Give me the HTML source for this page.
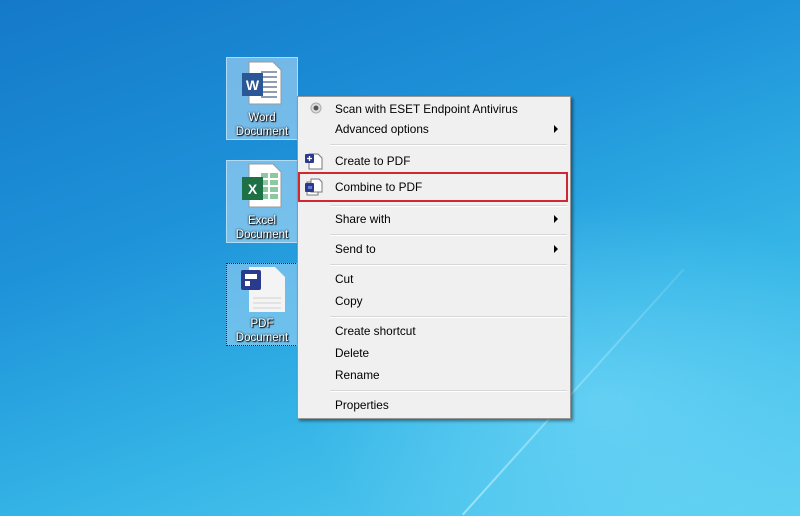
<!DOCTYPE html>
<html><head><meta charset="utf-8"><style>
*{margin:0;padding:0;box-sizing:border-box}
html,body{width:800px;height:516px;overflow:hidden;background:#1e8ad6}
body{position:relative;font-family:"Liberation Sans",sans-serif;}
.bg{position:absolute;left:0;top:0;width:800px;height:516px;overflow:hidden;background:linear-gradient(160deg,#1479c9 0%,#1e92d9 35%,#34b4e6 65%,#5ed0f2 100%);}
.glow{position:absolute;left:300px;top:200px;width:600px;height:400px;border-radius:50%;background:radial-gradient(ellipse at center,rgba(140,230,255,.45),rgba(140,230,255,0) 70%)}
.streak{position:absolute;left:462px;top:514px;width:330px;height:2px;background:linear-gradient(90deg,rgba(200,245,255,.6),rgba(200,245,255,.15));transform-origin:0 0;transform:rotate(-48deg)}
.ic{position:absolute;left:226px;width:72px;height:83px;background:rgba(190,225,250,.55);border:1px solid rgba(220,240,255,.6)}
.lbl{position:absolute;left:0;width:100%;text-align:center;color:#fff;font-size:11.5px;line-height:14px;text-shadow:0 0 2px #000,1px 1px 1px #000}
.menu{position:absolute;left:297px;top:96px;width:274px;height:323px;background:#f0f0f0;border:1px solid #979797;box-shadow:2px 2px 3px rgba(0,0,0,.45)}
.it{position:absolute;left:37px;font-size:11.8px;color:#000;line-height:14px}
.sep{position:absolute;left:32px;right:3px;height:2px;border-top:1px solid #d7d7d7;border-bottom:1px solid #fff}
.arr{position:absolute;left:256px;width:0;height:0;border-left:4px solid #000;border-top:4px solid transparent;border-bottom:4px solid transparent}
</style></head><body>
<div class="bg"><div class="glow"></div><div class="streak"></div>

<div class="ic" style="top:57px">
<svg width="72" height="55" style="position:absolute;left:0;top:0">
<path d="M22 4h24l8 8v34H22z" fill="#fff" stroke="#9a9a9a"/>
<g stroke="#6a7a9a" stroke-width="1.5"><line x1="34" y1="14" x2="50" y2="14"/><line x1="34" y1="19" x2="50" y2="19"/><line x1="34" y1="24" x2="50" y2="24"/><line x1="34" y1="29" x2="50" y2="29"/><line x1="34" y1="34" x2="50" y2="34"/><line x1="34" y1="39" x2="50" y2="39"/></g>
<rect x="15" y="15" width="21" height="23" fill="#2b5797"/>
<text x="25.5" y="32" fill="#fff" font-size="14" font-weight="bold" text-anchor="middle" font-family="Liberation Sans">W</text></svg>
<div class="lbl" style="top:53px">Word<br>Document</div></div>

<div class="ic" style="top:160px">
<svg width="72" height="55" style="position:absolute;left:0;top:0">
<path d="M22 3h24l8 8v35H22z" fill="#fff" stroke="#9a9a9a"/>
<g fill="#8cc8a0"><rect x="34" y="12" width="7" height="5"/><rect x="43" y="12" width="8" height="5"/><rect x="34" y="19" width="7" height="5"/><rect x="43" y="19" width="8" height="5"/><rect x="34" y="26" width="7" height="5"/><rect x="43" y="26" width="8" height="5"/><rect x="34" y="33" width="7" height="5"/><rect x="43" y="33" width="8" height="5"/></g>
<rect x="15" y="16" width="21" height="23" fill="#1e7145"/>
<text x="25.5" y="33" fill="#fff" font-size="14" font-weight="bold" text-anchor="middle" font-family="Liberation Sans">X</text></svg>
<div class="lbl" style="top:53px">Excel<br>Document</div></div>

<div class="ic" style="top:263px;border:1px dotted #222;background:rgba(190,225,250,.45)">
<svg width="72" height="55" style="position:absolute;left:0;top:0">
<path d="M22 3h26l10 10v35H22z" fill="#f4f4f4"/>
<g stroke="#ddd" stroke-width="1.5"><line x1="26" y1="34" x2="54" y2="34"/><line x1="26" y1="39" x2="54" y2="39"/><line x1="26" y1="44" x2="54" y2="44"/></g>
<rect x="14" y="6" width="20" height="20" rx="2" fill="#2a3a8c"/>
<rect x="18" y="10" width="12" height="5" fill="#fff"/><rect x="18" y="17" width="5" height="5" fill="#fff"/></svg>
<div class="lbl" style="top:53px">PDF<br>Document</div></div>

<div class="menu">
<svg width="12" height="12" style="position:absolute;left:12px;top:5px"><circle cx="6" cy="6" r="5" fill="#ddd" stroke="#aaa"/><circle cx="6" cy="6" r="2.5" fill="#555"/></svg>
<div class="it" style="top:5px">Scan with ESET Endpoint Antivirus</div>
<div class="it" style="top:25px">Advanced options</div><div class="arr" style="top:28px"></div>
<div class="sep" style="top:47px"></div>
<svg width="22" height="20" style="position:absolute;left:4px;top:54px"><path d="M7 3h9l4 4v11H7z" fill="#fff" stroke="#777"/><rect x="3" y="3" width="9" height="9" rx="1" fill="#2a3a8c"/><path d="M5 7.5h5M7.5 5v5" stroke="#fff" stroke-width="1.3"/></svg>
<div class="it" style="top:57px">Create to PDF</div>
<div style="position:absolute;left:0;top:75px;width:270px;height:30px;border:2px solid #d0282f"></div>
<svg width="22" height="20" style="position:absolute;left:4px;top:80px"><path d="M5 5h8l3 3v10H5z" fill="#fff" stroke="#777"/><path d="M9 2h8l3 3v10H9z" fill="#fff" stroke="#777"/><rect x="3" y="6" width="9" height="9" rx="1" fill="#2a3a8c"/><rect x="6" y="9" width="4" height="3" fill="#6a7ad0"/></svg>
<div class="it" style="top:83px">Combine to PDF</div>
<div class="sep" style="top:108px"></div>
<div class="it" style="top:115px">Share with</div><div class="arr" style="top:118px"></div>
<div class="sep" style="top:137px"></div>
<div class="it" style="top:145px">Send to</div><div class="arr" style="top:148px"></div>
<div class="sep" style="top:167px"></div>
<div class="it" style="top:175px">Cut</div>
<div class="it" style="top:197px">Copy</div>
<div class="sep" style="top:219px"></div>
<div class="it" style="top:227px">Create shortcut</div>
<div class="it" style="top:249px">Delete</div>
<div class="it" style="top:271px">Rename</div>
<div class="sep" style="top:293px"></div>
<div class="it" style="top:301px">Properties</div>
</div>
</div>
</body></html>
